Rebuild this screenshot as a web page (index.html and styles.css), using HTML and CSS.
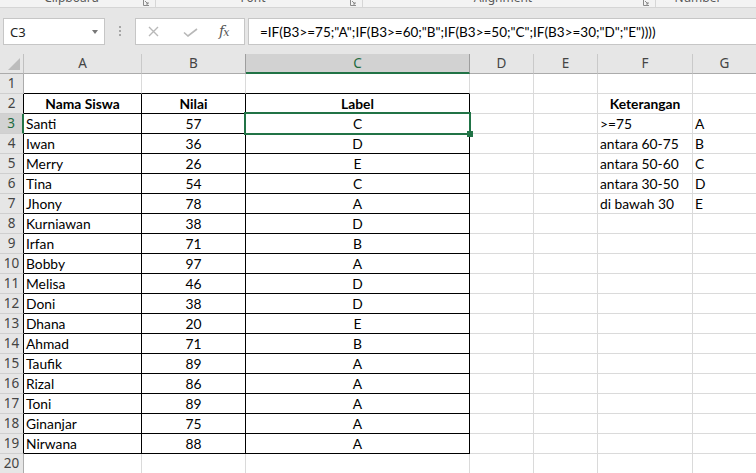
FILE: index.html
```html
<!DOCTYPE html>
<html lang="id">
<head>
<meta charset="utf-8">
<title>Excel - Nilai Siswa</title>
<link rel="stylesheet" href="styles.css">
</head>
<body>
<div class="ribbon">
  <div class="grp g1"><span class="glabel">Clipboard</span><svg class="launch" width="6" height="6" viewBox="0 0 6 6"><path d="M0.5 0v5.5H6M2 1l3 3M5 2v2H3" fill="none" stroke="#8a8a8a" stroke-width="1"/></svg></div>
  <div class="grp g2"><span class="glabel">Font</span><svg class="launch" width="6" height="6" viewBox="0 0 6 6"><path d="M0.5 0v5.5H6M2 1l3 3M5 2v2H3" fill="none" stroke="#8a8a8a" stroke-width="1"/></svg></div>
  <div class="grp g3"><span class="glabel">Alignment</span><svg class="launch" width="6" height="6" viewBox="0 0 6 6"><path d="M0.5 0v5.5H6M2 1l3 3M5 2v2H3" fill="none" stroke="#8a8a8a" stroke-width="1"/></svg></div>
  <div class="grp g4"><span class="glabel">Number</span></div>
</div>

<div class="fbar">
  <div class="namebox"><span>C3</span><span class="dd"></span></div>
  <svg class="dots" width="2" height="10" viewBox="0 0 2 10"><rect x="0" y="0" width="2" height="2" fill="#a6a6a6"/><rect x="0" y="4" width="2" height="2" fill="#a6a6a6"/><rect x="0" y="8" width="2" height="2" fill="#a6a6a6"/></svg>
  <div class="btnbox">
    <svg class="ico-x" width="11" height="11" viewBox="0 0 11 11"><path d="M1 1l9 9M10 1l-9 9" stroke="#b8b8b8" stroke-width="1.4" fill="none"/></svg>
    <svg class="ico-ok" width="15" height="9" viewBox="0 0 15 9"><path d="M1 4.5l4 3.5L14 1" stroke="#b8b8b8" stroke-width="1.6" fill="none"/></svg>
    <span class="fx">f<span class="fx-x">x</span></span>
  </div>
  <div class="fbox">=IF(B3&gt;=75;"A";IF(B3&gt;=60;"B";IF(B3&gt;=50;"C";IF(B3&gt;=30;"D";"E"))))</div>
</div>

<div class="sheet">
  <div class="corner"><svg width="24" height="19" viewBox="0 0 24 19"><path d="M20 4V16H8Z" fill="#bcbcbc"/></svg></div>
  <div class="ch">A</div><div class="ch hb">B</div><div class="ch sel">C</div><div class="ch">D</div><div class="ch">E</div><div class="ch">F</div><div class="ch">G</div><div class="ch">H</div>

  <div class="rh">1</div><div class="c tb"></div><div class="c tb"></div><div class="c tb"></div><div class="c"></div><div class="c"></div><div class="c"></div><div class="c"></div><div class="c"></div>

  <div class="rh tl">2</div><div class="c t b ctr">Nama Siswa</div><div class="c t b ctr">Nilai</div><div class="c t b ctr">Label</div><div class="c"></div><div class="c"></div><div class="c b ctr">Keterangan</div><div class="c"></div><div class="c"></div>

  <div class="rh sel">3</div><div class="c t">Santi</div><div class="c t ctr">57</div><div class="c t ctr">C</div><div class="c"></div><div class="c"></div><div class="c">&gt;=75</div><div class="c">A</div><div class="c"></div>

  <div class="rh tl">4</div><div class="c t">Iwan</div><div class="c t ctr">36</div><div class="c t ctr">D</div><div class="c"></div><div class="c"></div><div class="c">antara 60-75</div><div class="c">B</div><div class="c"></div>

  <div class="rh tl">5</div><div class="c t">Merry</div><div class="c t ctr">26</div><div class="c t ctr">E</div><div class="c"></div><div class="c"></div><div class="c">antara 50-60</div><div class="c">C</div><div class="c"></div>

  <div class="rh tl">6</div><div class="c t">Tina</div><div class="c t ctr">54</div><div class="c t ctr">C</div><div class="c"></div><div class="c"></div><div class="c">antara 30-50</div><div class="c">D</div><div class="c"></div>

  <div class="rh tl">7</div><div class="c t">Jhony</div><div class="c t ctr">78</div><div class="c t ctr">A</div><div class="c"></div><div class="c"></div><div class="c">di bawah 30</div><div class="c">E</div><div class="c"></div>

  <div class="rh tl">8</div><div class="c t">Kurniawan</div><div class="c t ctr">38</div><div class="c t ctr">D</div><div class="c"></div><div class="c"></div><div class="c"></div><div class="c"></div><div class="c"></div>

  <div class="rh tl">9</div><div class="c t">Irfan</div><div class="c t ctr">71</div><div class="c t ctr">B</div><div class="c"></div><div class="c"></div><div class="c"></div><div class="c"></div><div class="c"></div>

  <div class="rh tl">10</div><div class="c t">Bobby</div><div class="c t ctr">97</div><div class="c t ctr">A</div><div class="c"></div><div class="c"></div><div class="c"></div><div class="c"></div><div class="c"></div>

  <div class="rh tl">11</div><div class="c t">Melisa</div><div class="c t ctr">46</div><div class="c t ctr">D</div><div class="c"></div><div class="c"></div><div class="c"></div><div class="c"></div><div class="c"></div>

  <div class="rh tl">12</div><div class="c t">Doni</div><div class="c t ctr">38</div><div class="c t ctr">D</div><div class="c"></div><div class="c"></div><div class="c"></div><div class="c"></div><div class="c"></div>

  <div class="rh tl">13</div><div class="c t">Dhana</div><div class="c t ctr">20</div><div class="c t ctr">E</div><div class="c"></div><div class="c"></div><div class="c"></div><div class="c"></div><div class="c"></div>

  <div class="rh tl">14</div><div class="c t">Ahmad</div><div class="c t ctr">71</div><div class="c t ctr">B</div><div class="c"></div><div class="c"></div><div class="c"></div><div class="c"></div><div class="c"></div>

  <div class="rh tl">15</div><div class="c t">Taufik</div><div class="c t ctr">89</div><div class="c t ctr">A</div><div class="c"></div><div class="c"></div><div class="c"></div><div class="c"></div><div class="c"></div>

  <div class="rh tl">16</div><div class="c t">Rizal</div><div class="c t ctr">86</div><div class="c t ctr">A</div><div class="c"></div><div class="c"></div><div class="c"></div><div class="c"></div><div class="c"></div>

  <div class="rh tl">17</div><div class="c t">Toni</div><div class="c t ctr">89</div><div class="c t ctr">A</div><div class="c"></div><div class="c"></div><div class="c"></div><div class="c"></div><div class="c"></div>

  <div class="rh tl">18</div><div class="c t">Ginanjar</div><div class="c t ctr">75</div><div class="c t ctr">A</div><div class="c"></div><div class="c"></div><div class="c"></div><div class="c"></div><div class="c"></div>

  <div class="rh tl">19</div><div class="c t">Nirwana</div><div class="c t ctr">88</div><div class="c t ctr">A</div><div class="c"></div><div class="c"></div><div class="c"></div><div class="c"></div><div class="c"></div>

  <div class="rh">20</div><div class="c"></div><div class="c"></div><div class="c"></div><div class="c"></div><div class="c"></div><div class="c"></div><div class="c"></div><div class="c"></div>

  <div class="selbox"></div>
  <div class="handle"></div>
</div>
</body>
</html>
```

FILE: styles.css
```css
html, body {
  margin: 0;
  padding: 0;
  width: 756px;
  height: 473px;
  overflow: hidden;
  background: #ffffff;
}

/* ribbon group labels (cut off by the window top, as in the reference) */
.ribbon {
  display: flex;
  height: 7px;
  background: #f3f3f3;
  border-bottom: 1px solid #d5d5d5;
  overflow: hidden;
  width: 756px;
}
.grp {
  display: flex;
  align-items: flex-start;
  height: 7px;
  border-right: 1px solid #d6d6d6;
  box-sizing: content-box;
  overflow: hidden;
}
.g1 { width: 155px; flex: none; }
.g2 { width: 206px; flex: none; }
.g3 { width: 292px; flex: none; }
.g4 { flex: 1; border-right: none; padding-right: 16px; }
.glabel {
  flex: 1;
  text-align: center;
  font-family: "Noto Sans", sans-serif;
  font-size: 12px;
  line-height: 16px;
  color: #5a5a5a;
  margin-top: -10px;
  white-space: nowrap;
}
.launch {
  margin-right: 6px;
  flex: none;
}

/* formula bar */
.fbar {
  display: flex;
  align-items: flex-start;
  height: 46px;
  box-sizing: border-box;
  padding-top: 10px;
  background: #e6e6e6;
  width: 756px;
}
.namebox {
  margin-left: 3px;
  width: 102px;
  height: 27px;
  box-sizing: border-box;
  background: #fff;
  border: 1px solid #c6c6c6;
  display: flex;
  align-items: center;
  justify-content: space-between;
  padding: 0 6px;
  font-family: "Noto Sans", sans-serif;
  font-size: 13px;
  line-height: 16px;
  color: #222;
}
.dd {
  width: 0;
  height: 0;
  border-left: 3.5px solid transparent;
  border-right: 3.5px solid transparent;
  border-top: 4px solid #777;
}
.dots {
  margin: 8px 14px 0 14px;
  flex: none;
}
.btnbox {
  width: 110px;
  height: 27px;
  box-sizing: border-box;
  background: #fff;
  border: 1px solid #c6c6c6;
  display: flex;
  align-items: center;
  padding-left: 12px;
  flex: none;
}
.ico-x { margin-right: 24px; flex: none; }
.ico-ok { margin-right: 21px; flex: none; margin-top: 2px; }
.fx {
  font-family: "DejaVu Serif", serif;
  font-style: italic;
  font-size: 14px;
  line-height: 16px;
  color: #555;
  letter-spacing: -1px;
}
.fx-x { font-size: 11px; }
.fbox {
  margin-left: 3px;
  flex: 1;
  height: 27px;
  box-sizing: border-box;
  background: #fff;
  border: 1px solid #c6c6c6;
  border-right: none;
  padding-left: 11px;
  display: flex;
  align-items: center;
  font-family: "Lato", sans-serif;
  font-size: 13.5px;
  line-height: 16px;
  color: #000;
  white-space: nowrap;
  overflow: hidden;
}

/* sheet grid */
.sheet {
  position: relative;
  display: grid;
  grid-template-columns: 24px 118px 104px 224px 64px 64px 95px 64px 1fr;
  grid-auto-rows: 20px;
  width: 820px;
}
.corner {
  background: #e6e6e6;
  border-right: 1px solid #c0c0c0;
  border-bottom: 1px solid #ababab;
  box-sizing: border-box;
}
.corner svg { display: block; }
.ch {
  background: #e6e6e6;
  border-right: 1px solid #c9c9c9;
  border-bottom: 1px solid #ababab;
  box-sizing: border-box;
  text-align: center;
  font-family: "Noto Sans", sans-serif;
  font-size: 13.5px;
  line-height: 19px;
  color: #444;
}
.ch.hb { border-right-color: #9e9e9e; }
.ch.sel {
  background: #d2d2d2;
  border-right-color: #9e9e9e;
  border-bottom: 2px solid #217346;
  color: #1f6b40;
}
.rh {
  background: #e6e6e6;
  border-right: 1px solid #ababab;
  border-bottom: 1px solid #cfcfcf;
  box-sizing: border-box;
  text-align: center;
  font-family: "Noto Sans", sans-serif;
  font-size: 13.5px;
  line-height: 19px;
  color: #444;
}
.rh.tl { border-right-color: #000; }
.rh.sel {
  background: #d2d2d2;
  border-right: 2px solid #217346;
  color: #1f6b40;
}
.c {
  box-sizing: border-box;
  border-right: 1px solid #dadada;
  border-bottom: 1px solid #dadada;
  padding: 2px 2px 0 2px;
  font-family: "Lato", sans-serif;
  font-size: 13.8px;
  line-height: 16px;
  color: #000;
  white-space: nowrap;
  overflow: hidden;
}
.c.t { border-right-color: #000; border-bottom-color: #000; }
.c.tb { border-bottom-color: #000; }
.ctr { text-align: center; }
.b { font-weight: 700; }

/* active cell selection overlay */
.selbox {
  position: absolute;
  left: 244px;
  top: 58px;
  width: 227px;
  height: 23px;
  box-sizing: border-box;
  border: 2px solid #217346;
}
.handle {
  position: absolute;
  left: 467px;
  top: 77px;
  width: 6px;
  height: 6px;
  background: #217346;
}
```
